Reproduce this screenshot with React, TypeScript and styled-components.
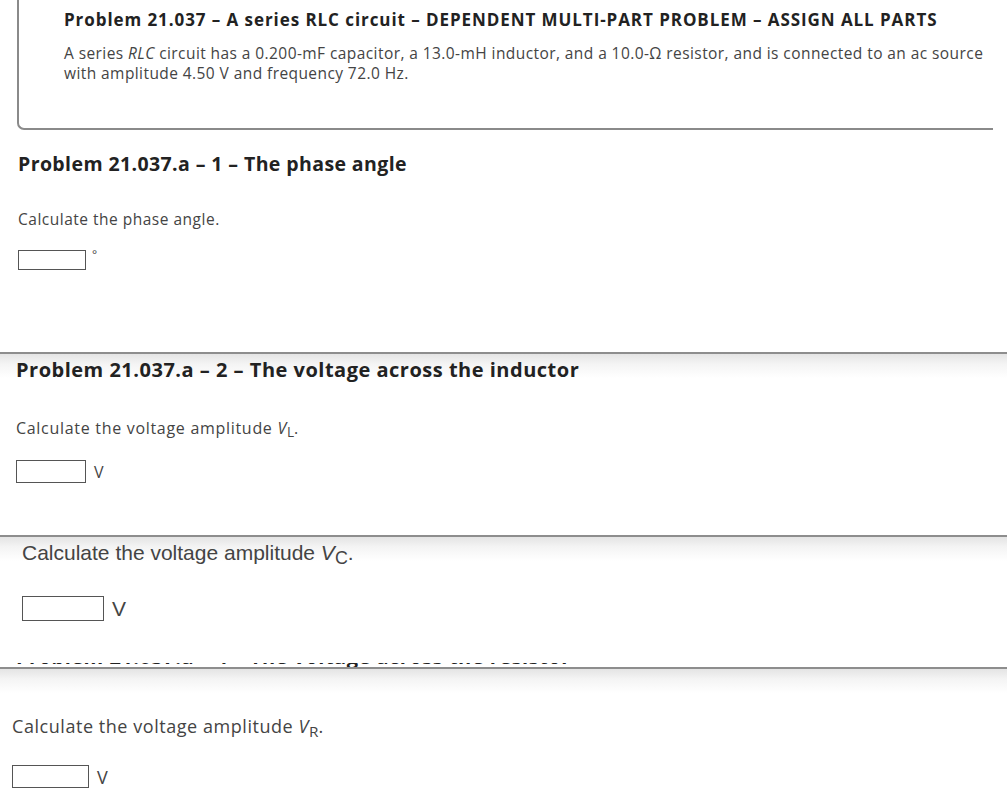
import React from "react";
import styled, { createGlobalStyle } from "styled-components";

const Global = createGlobalStyle`
  html, body { margin: 0; padding: 0; background: #fff; }
  body { font-family: "Open Sans", Lato, sans-serif; color: #333; }
`;

const Page = styled.div`
  width: 1007px;
  height: 803px;
  overflow: hidden;
  display: flex;
  flex-direction: column;
`;

const Card = styled.div`
  margin-left: 17px;
  width: 976px;
  height: 130px;
  flex: none;
  box-sizing: border-box;
  border-left: 2px solid #8a8a8a;
  border-bottom: 2px solid #8a8a8a;
  border-bottom-left-radius: 7px;
  padding: 10px 0 0 45px;
`;

const CardTitle = styled.div`
  font-weight: 700;
  font-size: 17px;
  letter-spacing: 0.93px;
  color: #222;
  line-height: 20px;
  white-space: nowrap;
`;

const CardText = styled.p`
  margin: 13px 0 0;
  font-size: 15.5px;
  letter-spacing: 0.42px;
  line-height: 20px;
  color: #444;
  white-space: nowrap;
`;

const Part = styled.section<{ $h: number; $pl: number; $line?: boolean }>`
  height: ${(p) => p.$h}px;
  flex: none;
  box-sizing: border-box;
  padding-left: ${(p) => p.$pl}px;
  display: flex;
  flex-direction: column;
  align-items: flex-start;
  ${(p) =>
    p.$line
      ? `border-top: 2px solid #8d8d8d;
         background: linear-gradient(#e4e4e4 0px, #f4f4f4 10px, #fff 24px);`
      : ""}
`;

const Heading = styled.h2<{ $mt: number; $size: number; $ls: number }>`
  margin: ${(p) => p.$mt}px 0 0;
  font-size: ${(p) => p.$size}px;
  letter-spacing: ${(p) => p.$ls}px;
  line-height: 24px;
  font-weight: 700;
  color: #222;
  white-space: nowrap;
`;

const Prompt = styled.p<{ $mt: number; $size?: number; $ls?: number; $narrow?: boolean }>`
  margin: ${(p) => p.$mt}px 0 0;
  font-size: ${(p) => p.$size ?? 15}px;
  letter-spacing: ${(p) => p.$ls ?? 0}px;
  line-height: 1.2;
  color: #444;
  white-space: nowrap;
  ${(p) =>
    p.$narrow
      ? `font-family: "Liberation Sans Narrow", "Liberation Sans", sans-serif;`
      : ""}
  i { font-style: italic; }
  sub { font-size: 0.85em; vertical-align: -0.25em; line-height: 0; font-style: normal; letter-spacing: 0; }
`;

const AnswerRow = styled.div<{ $mt: number; $size?: number; $narrow?: boolean }>`
  margin-top: ${(p) => p.$mt}px;
  display: flex;
  align-items: center;
  gap: 8px;
  font-size: ${(p) => p.$size ?? 15}px;
  color: #444;
  ${(p) =>
    p.$narrow
      ? `font-family: "Liberation Sans Narrow", "Liberation Sans", sans-serif;`
      : ""}
`;

const Box = styled.div<{ $w: number; $h: number }>`
  width: ${(p) => p.$w}px;
  height: ${(p) => p.$h}px;
  box-sizing: border-box;
  border: 1px solid #555;
  background: #fff;
`;

const Degree = styled.span`
  font-size: 12px;
  align-self: flex-start;
  margin-top: -4px;
  margin-left: -2px;
`;

const ClipStrip = styled.div`
  height: 4px;
  flex: none;
  overflow: hidden;
  display: flex;
  align-items: flex-end;
  padding-left: 16px;
`;

const ClippedHeading = styled.div`
  font-size: 20px;
  letter-spacing: 0.5px;
  line-height: 24px;
  font-weight: 700;
  color: #222;
  white-space: nowrap;
  margin-bottom: -2px;
`;

export default function App() {
  return (
    <>
      <Global />
      <Page>
        <Card>
          <CardTitle>
            Problem 21.037 – A series RLC circuit – DEPENDENT MULTI-PART PROBLEM – ASSIGN ALL PARTS
          </CardTitle>
          <CardText>
            A series <i>RLC</i> circuit has a 0.200-mF capacitor, a 13.0-mH inductor, and a 10.0-Ω resistor, and is connected to an ac source
            <br />
            with amplitude 4.50 V and frequency 72.0 Hz.
          </CardText>
        </Card>

        <Part $h={222} $pl={18}>
          <Heading $mt={22} $size={19.5} $ls={0.4}>
            Problem 21.037.a – 1 – The phase angle
          </Heading>
          <Prompt $mt={34} $size={15.5} $ls={0.5}>
            Calculate the phase angle.
          </Prompt>
          <AnswerRow $mt={21}>
            <Box $w={68} $h={20} />
            <Degree>°</Degree>
          </AnswerRow>
        </Part>

        <Part $h={183} $pl={16} $line>
          <Heading $mt={4} $size={20} $ls={0.5}>
            Problem 21.037.a – 2 – The voltage across the inductor
          </Heading>
          <Prompt $mt={37} $size={16} $ls={0.7}>
            Calculate the voltage amplitude <i>V</i><sub>L</sub>.
          </Prompt>
          <AnswerRow $mt={22} $size={16}>
            <Box $w={70} $h={23} />
            <span>V</span>
          </AnswerRow>
        </Part>

        <Part $h={128} $pl={22} $line>
          <Prompt $mt={3} $size={21} $narrow>
            Calculate the voltage amplitude <i>V</i><sub>C</sub>.
          </Prompt>
          <AnswerRow $mt={31} $size={21} $narrow>
            <Box $w={82} $h={25} />
            <span>V</span>
          </AnswerRow>
        </Part>

        <ClipStrip>
          <ClippedHeading>Problem 21.037.a – 4 – The voltage across the resistor</ClippedHeading>
        </ClipStrip>

        <Part $h={136} $pl={12} $line>
          <Prompt $mt={47} $size={18} $ls={0.55}>
            Calculate the voltage amplitude <i>V</i><sub>R</sub>.
          </Prompt>
          <AnswerRow $mt={27} $size={18}>
            <Box $w={77} $h={23} />
            <span>V</span>
          </AnswerRow>
        </Part>
      </Page>
    </>
  );
}
